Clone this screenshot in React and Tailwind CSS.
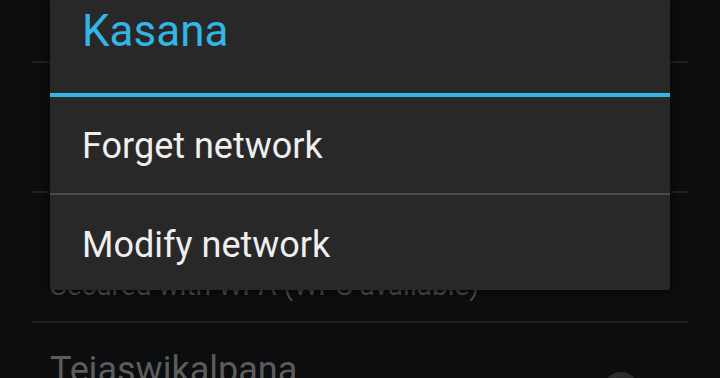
import React from 'react';

const font = { fontFamily: 'Roboto, "Noto Sans", sans-serif' };

function NetworkRow({ title, subtitle }) {
    return (
        <div className="h-[130px] pt-[25px] border-t-2 border-[#1e1f21] px-[18px] overflow-hidden">
            <div className="text-[36px] leading-[44px] text-[#5c5c5c]">{title}</div>
            {subtitle && <div className="mt-[6px] text-[28px] leading-[36px] text-[#4c4c4c]">{subtitle}</div>}
        </div>
    );
}

export default function App() {
    return (
        <div className="relative w-[720px] h-[378px] overflow-hidden bg-[#0c0d0f]" style={font}>
            {/* wifi list behind the dialog */}
            <div className="mx-[32px] flex flex-col">
                <div className="h-[61px]" />
                <NetworkRow title="Kasana" subtitle="Secured with WPA2" />
                <NetworkRow title="Airtel_Home" subtitle="Secured with WPA (WPS available)" />
                <NetworkRow title="Tejaswikalpana" subtitle="Secured with WPA2" />
            </div>
            <div className="absolute left-[603px] top-[372px] w-[36px] h-[36px] rounded-full bg-[#2c2c2c]" />

            {/* context dialog */}
            <div className="absolute left-[50px] top-0 w-[620px] bg-[#282828] rounded-b-[3px] shadow-[0_2px_6px_rgba(0,0,0,0.6)]">
                <div className="h-[93px] pl-[32px] pt-[9px]">
                    <div className="text-[44px] leading-[45px] text-[#33b5e5]">Kasana</div>
                </div>
                <div className="h-[4px] bg-[#33b5e5]" />
                <div className="h-[96px] pl-[32px] flex items-center pt-[2px] text-[36px] leading-[36px] text-[#efefef]">Forget network</div>
                <div className="h-[2px] bg-[#4a4a4a]" />
                <div className="h-[95px] pl-[32px] flex items-center pt-[4px] text-[36px] leading-[36px] text-[#efefef]">Modify network</div>
            </div>
        </div>
    );
}
